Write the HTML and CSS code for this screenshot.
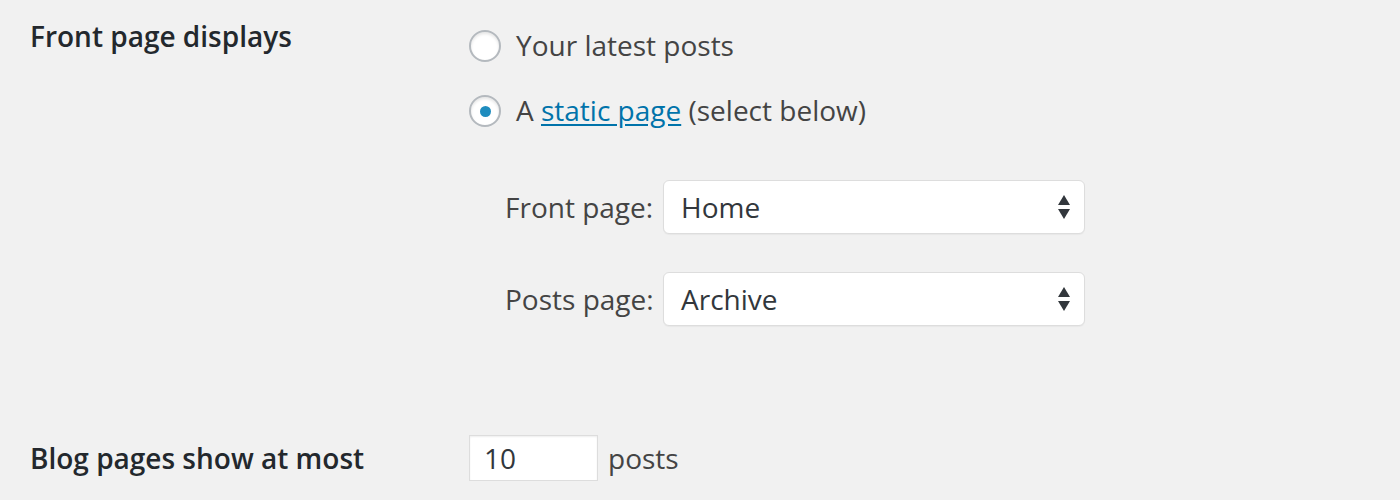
FILE: index.html
```html
<!DOCTYPE html>
<html>
<head>
<meta charset="utf-8">
<link rel="stylesheet" href="styles.css">
</head>
<body>
<div class="form-table">
  <div class="row row-front">
    <div class="th">Front page displays</div>
    <div class="td">
      <label class="radio-line"><span class="radio"></span>Your latest posts</label>
      <label class="radio-line"><span class="radio checked"></span>A&nbsp;<a href="#">static page</a>&nbsp;(select below)</label>
      <div class="sub">
        <div class="sub-row"><span class="sub-label">Front page:</span><div class="select"><span>Home</span><svg class="arrows" width="14" height="26" viewBox="0 0 14 26"><path d="M7 1 L13 11 L1 11 Z" fill="#32373c"/><path d="M1 15 L13 15 L7 25 Z" fill="#32373c"/></svg></div></div>
        <div class="sub-row"><span class="sub-label">Posts page:</span><div class="select"><span>Archive</span><svg class="arrows" width="14" height="26" viewBox="0 0 14 26"><path d="M7 1 L13 11 L1 11 Z" fill="#32373c"/><path d="M1 15 L13 15 L7 25 Z" fill="#32373c"/></svg></div></div>
      </div>
    </div>
  </div>
  <div class="row row-blog">
    <div class="th">Blog pages show at most</div>
    <div class="td inline">
      <div class="num">10</div><span class="unit">posts</span>
    </div>
  </div>
</div>
</body>
</html>
```
FILE: styles.css
```css
html, body {
  margin: 0;
  padding: 0;
  background: #f1f1f1;
  font-family: "Open Sans", "Noto Sans", sans-serif;
  font-size: 28px;
  color: #444;
}
.form-table {
  display: flex;
  flex-direction: column;
}
.row {
  display: grid;
  grid-template-columns: 469px 1fr;
}
.th {
  padding-left: 30px;
  font-weight: 600;
  color: #23282d;
  line-height: 40px;
}
.row-front .th {
  padding-top: 16px;
}
.row-front .td {
  padding-top: 25px;
}
.radio-line {
  display: flex;
  align-items: center;
  height: 40px;
  margin-bottom: 25px;
  white-space: nowrap;
}
.radio-line a {
  color: #0073aa;
  text-decoration: underline;
  text-underline-offset: 3px;
}
.radio {
  width: 28px;
  height: 28px;
  border: 2px solid #b4b9be;
  border-radius: 50%;
  background: #fff;
  box-shadow: inset 0 2px 3px rgba(0,0,0,.1);
  margin-right: 15px;
  flex: none;
  display: flex;
  align-items: center;
  justify-content: center;
  position: relative;
  top: 1px;
}
.radio.checked::after {
  content: "";
  width: 11px;
  height: 11px;
  border-radius: 50%;
  background: #1e8cbe;
}
.sub {
  display: flex;
  flex-direction: column;
  gap: 38px;
  padding-top: 25px;
  padding-left: 36px;
}
.sub-row {
  display: flex;
  align-items: center;
}
.sub-label {
  width: 147px;
  margin-right: 11px;
  white-space: nowrap;
}
.select {
  height: 52px;
  border: 1px solid #ddd;
  border-radius: 6px;
  background: #fff;
  box-shadow: 0 1px 1px rgba(0,0,0,.04);
  display: flex;
  align-items: center;
  justify-content: space-between;
  padding: 0 13px 0 17px;
  box-sizing: content-box;
  width: 390px;
  color: #32373c;
}
.row-blog {
  margin-top: 109px;
}
.row-blog .th {
  line-height: 46px;
}
.inline {
  display: flex;
  align-items: center;
}
.num {
  width: 113px;
  height: 44px;
  border: 1px solid #ddd;
  box-shadow: inset 0 1px 2px rgba(0,0,0,.07);
  background: #fff;
  padding-left: 14px;
  line-height: 44px;
  color: #32373c;
  box-sizing: content-box;
}
.unit {
  margin-left: 10px;
}
```
